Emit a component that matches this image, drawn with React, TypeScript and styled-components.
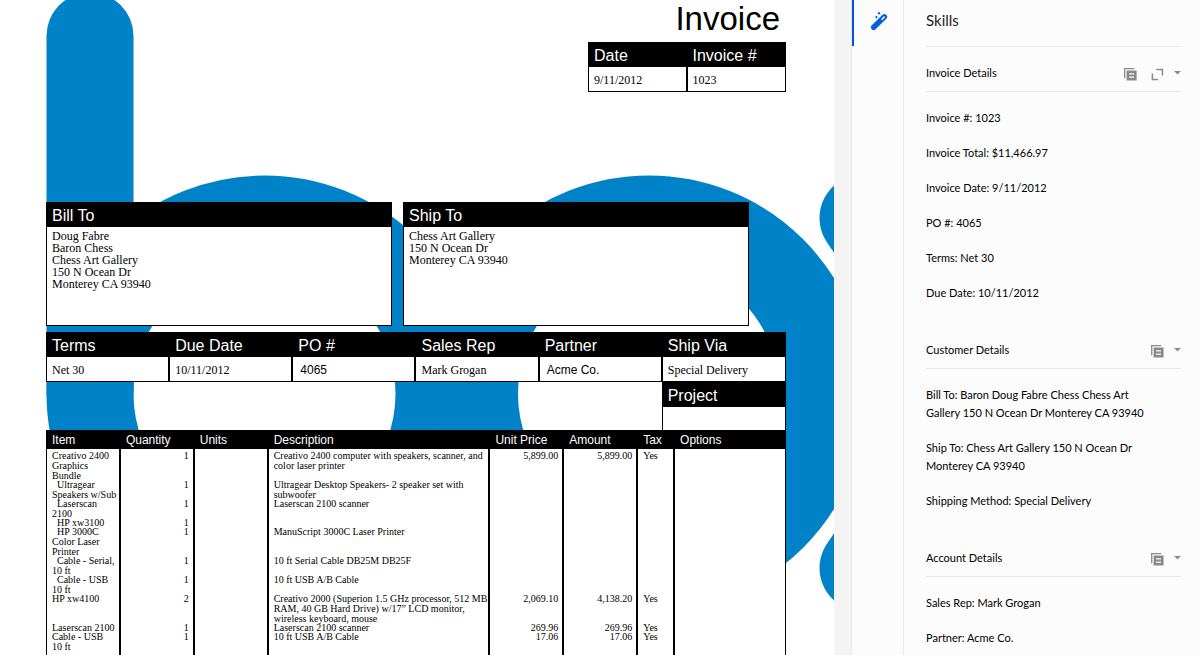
import React from "react";
import styled, { createGlobalStyle, css } from "styled-components";

const SANS = '"Liberation Sans", Arial, sans-serif';
const SERIF = '"Liberation Serif", "Times New Roman", serif';
const UI = 'Lato, "Open Sans", sans-serif';

const GlobalStyle = createGlobalStyle`
  *, *::before, *::after { box-sizing: border-box; }
  body { margin: 0; background: #fcfcfc; color: #000; }
`;

const Layout = styled.div`
  display: flex;
  height: 100vh;
  overflow: hidden;
`;

const Viewer = styled.main`
  flex: 1;
  min-width: 0;
  padding-right: 17px;
  background: #f4f4f4;
  border-right: 1px solid #e8e8e8;
  overflow-y: auto;
  scrollbar-width: none;
`;

const Paper = styled.article`
  position: relative;
  display: flex;
  flex-direction: column;
  min-height: 100%;
  padding: 0 48px 48px 46px;
  background: #fff;
  overflow: hidden;
`;

const Watermark = styled.svg`
  position: absolute;
  top: 0;
  left: 0;
  width: 100%;
  height: auto;
`;

const Title = styled.h1`
  position: relative;
  margin: 0;
  padding: 1px 6px 5px 0;
  font: 400 33px/36px ${SANS};
  text-align: right;
`;

const Grid = styled.table<{ $width?: string }>`
  position: relative;
  align-self: flex-end;
  width: ${(p) => p.$width ?? "100%"};
  table-layout: fixed;
  border-collapse: separate;
  border-spacing: 0;
  border-left: 1px solid #000;
`;

const GridHead = styled.th`
  height: 25px;
  padding: 2px 5px 0;
  background: #000;
  color: #fff;
  font: 400 16px/23px ${SANS};
  text-align: left;
  white-space: nowrap;
`;

const GridCell = styled.td<{ $sans?: boolean; $open?: boolean }>`
  height: ${(p) => (p.$open ? 23 : 25)}px;
  padding: 2px 5px 0 ${(p) => (p.$sans ? 7 : 5)}px;
  background: #fff;
  border-right: 1px solid #000;
  border-bottom: ${(p) => (p.$open ? 0 : 1)}px solid #000;
  font: 12px/22px ${(p) => (p.$sans ? SANS : SERIF)};
  white-space: nowrap;

  &:not(:last-child) { border-right-width: 2px; }
`;

const Addresses = styled.div`
  position: relative;
  display: flex;
  gap: 11px;
  margin: 110px 37px 6px 0;
`;

const AddressBox = styled.section`
  flex: 1;
  min-height: 124px;
  background: #fff;
  border: 1px solid #000;
`;

const AddressHead = styled.h2`
  margin: 0;
  padding: 2px 5px 0;
  background: #000;
  color: #fff;
  font: 400 16px/22px ${SANS};
`;

const AddressText = styled.address`
  padding: 3px 5px;
  font: normal 12px/12px ${SERIF};
  white-space: pre-line;
`;

const Items = styled(Grid)`
  background: #fff;
`;

const ItemHead = styled.th`
  height: 19px;
  padding: 1px 5px 0;
  background: #000;
  color: #fff;
  font: 400 12px/18px ${SANS};
  text-align: left;
  white-space: nowrap;
`;

const ItemCell = styled.td<{ $end?: boolean }>`
  padding: 0 4px 0 5px;
  border-right: 2px solid #000;
  font: 10px/10px ${SERIF};
  text-align: ${(p) => (p.$end ? "right" : "left")};
  vertical-align: top;
  white-space: pre;

  &:last-child { border-right-width: 1px; }
`;

const ItemText = styled.div`
  margin-bottom: -1px;
`;

const Spacer = styled.tr<{ $height: number }>`
  height: ${(p) => p.$height}px;
`;

const Rail = styled.nav`
  flex: none;
  width: 52px;
  border-right: 1px solid #e8e8e8;
`;

const RailTab = styled.button`
  display: flex;
  align-items: center;
  justify-content: center;
  width: 100%;
  height: 46px;
  padding: 0 0 4px;
  background: none;
  border: 0;
  border-left: 2px solid #0055d4;
`;

const Sidebar = styled.aside`
  flex: none;
  width: 296px;
  padding: 0 19px 24px 22px;
  overflow-y: auto;
  scrollbar-width: none;
  font: 11px/18px ${UI};
`;

const SidebarTitle = styled.h2`
  margin: 0;
  height: 47px;
  padding-top: 11px;
  border-bottom: 1px solid #e8e8e8;
  color: #222;
  font: 400 15px/18px ${UI};
`;

const Card = styled.section`
  margin-bottom: 22px;
`;

const CardHead = styled.header`
  display: flex;
  align-items: center;
  padding: 17px 0 9px;
  border-bottom: 1px solid #e8e8e8;
`;

const CardTitle = styled.h3`
  flex: 1;
  margin: 0;
  font: inherit;
`;

const iconButton = css`
  display: flex;
  padding: 0;
  background: none;
  border: 0;
  color: #8a8a8a;
`;

const IconButton = styled.button`
  ${iconButton}
  margin-right: 10px;

  & + & { margin-left: 4px; }
`;

const CaretButton = styled.button`
  ${iconButton}
`;

const Actions = styled.div`
  display: flex;
  align-items: center;
  height: 18px;
  padding-top: 2px;
`;

const Facts = styled.ul`
  display: flex;
  flex-direction: column;
  gap: 17px;
  margin: 0;
  padding: 17px 0 0;
  list-style: none;
`;

const Fact = styled.li`
  white-space: pre-line;
`;

const CopyIcon = () => (
  <svg width="13" height="13" viewBox="0 0 13 13" aria-hidden="true">
    <path d="M.7 10.2V.7h9.5" fill="none" stroke="currentColor" strokeWidth="1.3" />
    <path
      fill="currentColor"
      fillRule="evenodd"
      d="M2.6 2.6h10v10h-10zM5.2 5.2v1.2h4.8V5.2zM5.2 8.6v1.2h4.8V8.6z"
    />
  </svg>
);

const ExpandIcon = () => (
  <svg width="13" height="13" viewBox="0 0 13 13" aria-hidden="true">
    <path
      d="M5.2 1.4h6.2v6M1.4 5.4v6.2h5.8"
      fill="none"
      stroke="currentColor"
      strokeWidth="1.5"
    />
  </svg>
);

const CaretIcon = () => (
  <svg width="7" height="6" viewBox="0 0 7 6" aria-hidden="true">
    <path d="M0 0h7L3.5 3.6z" fill="currentColor" />
  </svg>
);

const WandIcon = () => (
  <svg width="18" height="20" viewBox="0 0 18 20" aria-hidden="true">
    <path d="M3.7 16.3 14.4 5.8" stroke="#0061d5" strokeWidth="5.4" strokeLinecap="round" />
    <path d="M12 8.2 14.2 6" stroke="#fcfcfc" strokeWidth="1.5" strokeLinecap="round" />
    <path
      d="m9 .7 1.6 1.5L9 3.8 7.5 2.2zM6.4 4.7l1.4 1.4-1.4 1.4L5 6.100z"
      fill="#0061d5"
    />
  </svg>
);

type Column = { label: string; width: string; end?: boolean };

const columns: Column[] = [
  { label: "Item", width: "10%" },
  { label: "Quantity", width: "10%", end: true },
  { label: "Units", width: "10%" },
  { label: "Description", width: "30%" },
  { label: "Unit Price", width: "10%", end: true },
  { label: "Amount", width: "10%", end: true },
  { label: "Tax", width: "5%" },
  { label: "Options", width: "15%" },
];

const rows: string[][] = [
  ["Creativo 2400\nGraphics\nBundle", "1", "", "Creativo 2400 computer with speakers, scanner, and\ncolor laser printer", "5,899.00", "5,899.00", "Yes", ""],
  ["  Ultragear\nSpeakers w/Sub", "1", "", "Ultragear Desktop Speakers- 2 speaker set with\nsubwoofer", "", "", "", ""],
  ["  Laserscan\n2100", "1", "", "Laserscan 2100 scanner", "", "", "", ""],
  ["  HP xw3100", "1", "", "", "", "", "", ""],
  ["  HP 3000C\nColor Laser\nPrinter", "1", "", "ManuScript 3000C Laser Printer", "", "", "", ""],
  ["  Cable - Serial,\n10 ft", "1", "", "10 ft Serial Cable DB25M DB25F", "", "", "", ""],
  ["  Cable - USB\n10 ft", "1", "", "10 ft USB A/B Cable", "", "", "", ""],
  ["HP xw4100", "2", "", "Creativo 2000 (Superion 1.5 GHz processor, 512 MB\nRAM, 40 GB Hard Drive) w/17” LCD monitor,\nwireless keyboard, mouse", "2,069.10", "4,138.20", "Yes", ""],
  ["Laserscan 2100", "1", "", "Laserscan 2100 scanner", "269.96", "269.96", "Yes", ""],
  ["Cable - USB\n10 ft", "1", "", "10 ft USB A/B Cable", "17.06", "17.06", "Yes", ""],
];

const terms = [
  { label: "Terms", value: "Net 30" },
  { label: "Due Date", value: "10/11/2012" },
  { label: "PO #", value: "4065", sans: true },
  { label: "Sales Rep", value: "Mark Grogan" },
  { label: "Partner", value: "Acme Co.", sans: true },
  { label: "Ship Via", value: "Special Delivery" },
];

const addresses = [
  { label: "Bill To", text: "Doug Fabre\nBaron Chess\nChess Art Gallery\n150 N Ocean Dr\nMonterey CA 93940" },
  { label: "Ship To", text: "Chess Art Gallery\n150 N Ocean Dr\nMonterey CA 93940" },
];

const cards = [
  {
    title: "Invoice Details",
    expandable: true,
    facts: [
      "Invoice #: 1023",
      "Invoice Total: $11,466.97",
      "Invoice Date: 9/11/2012",
      "PO #: 4065",
      "Terms: Net 30",
      "Due Date: 10/11/2012",
    ],
  },
  {
    title: "Customer Details",
    facts: [
      "Bill To: Baron Doug Fabre Chess Chess Art\nGallery 150 N Ocean Dr Monterey CA 93940",
      "Ship To: Chess Art Gallery 150 N Ocean Dr\nMonterey CA 93940",
      "Shipping Method: Special Delivery",
    ],
  },
  { title: "Account Details", facts: ["Sales Rep: Mark Grogan", "Partner: Acme Co."] },
];

const SpacerRow = ({ height }: { height: number }) => (
  <Spacer $height={height} aria-hidden="true">
    {columns.map((c) => (
      <ItemCell key={c.label} />
    ))}
  </Spacer>
);

function Invoice() {
  return (
    <Paper>
      <Watermark viewBox="0 0 834 655" aria-hidden="true">
        <g fill="none" stroke="#0082c8" strokeWidth="87">
          <path d="M90 393V36" strokeLinecap="round" />
          <circle cx="264.5" cy="393.5" r="174.5" />
          <circle cx="649" cy="393.5" r="174.5" />
          <path d="m863 218 118 175.5L863 568" strokeLinecap="round" />
        </g>
      </Watermark>

      <Title>Invoice</Title>
      <Grid $width="198px">
        <thead>
          <tr>
            <GridHead scope="col">Date</GridHead>
            <GridHead scope="col">Invoice #</GridHead>
          </tr>
        </thead>
        <tbody>
          <tr>
            <GridCell>9/11/2012</GridCell>
            <GridCell>1023</GridCell>
          </tr>
        </tbody>
      </Grid>

      <Addresses>
        {addresses.map((a) => (
          <AddressBox key={a.label}>
            <AddressHead>{a.label}</AddressHead>
            <AddressText>{a.text}</AddressText>
          </AddressBox>
        ))}
      </Addresses>

      <Grid>
        <thead>
          <tr>
            {terms.map((t) => (
              <GridHead key={t.label} scope="col">{t.label}</GridHead>
            ))}
          </tr>
        </thead>
        <tbody>
          <tr>
            {terms.map((t) => (
              <GridCell key={t.label} $sans={t.sans}>{t.value}</GridCell>
            ))}
          </tr>
        </tbody>
      </Grid>
      <Grid $width="calc(100% / 6 + 1px)">
        <thead>
          <tr>
            <GridHead scope="col">Project</GridHead>
          </tr>
        </thead>
        <tbody>
          <tr>
            <GridCell $open />
          </tr>
        </tbody>
      </Grid>

      <Items>
        <colgroup>
          {columns.map((c) => (
            <col key={c.label} width={c.width} />
          ))}
        </colgroup>
        <thead>
          <tr>
            {columns.map((c) => (
              <ItemHead key={c.label} scope="col">{c.label}</ItemHead>
            ))}
          </tr>
        </thead>
        <tbody>
          <SpacerRow height={2} />
          {rows.map((row, i) => (
            <tr key={i}>
              {row.map((text, j) => (
                <ItemCell key={j} $end={columns[j].end}>
                  <ItemText>{text}</ItemText>
                </ItemCell>
              ))}
            </tr>
          ))}
          <SpacerRow height={120} />
        </tbody>
      </Items>
    </Paper>
  );
}

export default function App() {
  return (
    <Layout>
      <GlobalStyle />
      <Viewer>
        <Invoice />
      </Viewer>
      <Rail>
        <RailTab type="button" aria-label="Skills">
          <WandIcon />
        </RailTab>
      </Rail>
      <Sidebar>
        <SidebarTitle>Skills</SidebarTitle>
        {cards.map((card) => (
          <Card key={card.title}>
            <CardHead>
              <CardTitle>{card.title}</CardTitle>
              <Actions>
                <IconButton type="button" aria-label="Copy">
                  <CopyIcon />
                </IconButton>
                {card.expandable && (
                  <IconButton type="button" aria-label="Expand">
                    <ExpandIcon />
                  </IconButton>
                )}
                <CaretButton type="button" aria-label={`Collapse ${card.title}`}>
                  <CaretIcon />
                </CaretButton>
              </Actions>
            </CardHead>
            <Facts>
              {card.facts.map((fact) => (
                <Fact key={fact}>{fact}</Fact>
              ))}
            </Facts>
          </Card>
        ))}
      </Sidebar>
    </Layout>
  );
}
